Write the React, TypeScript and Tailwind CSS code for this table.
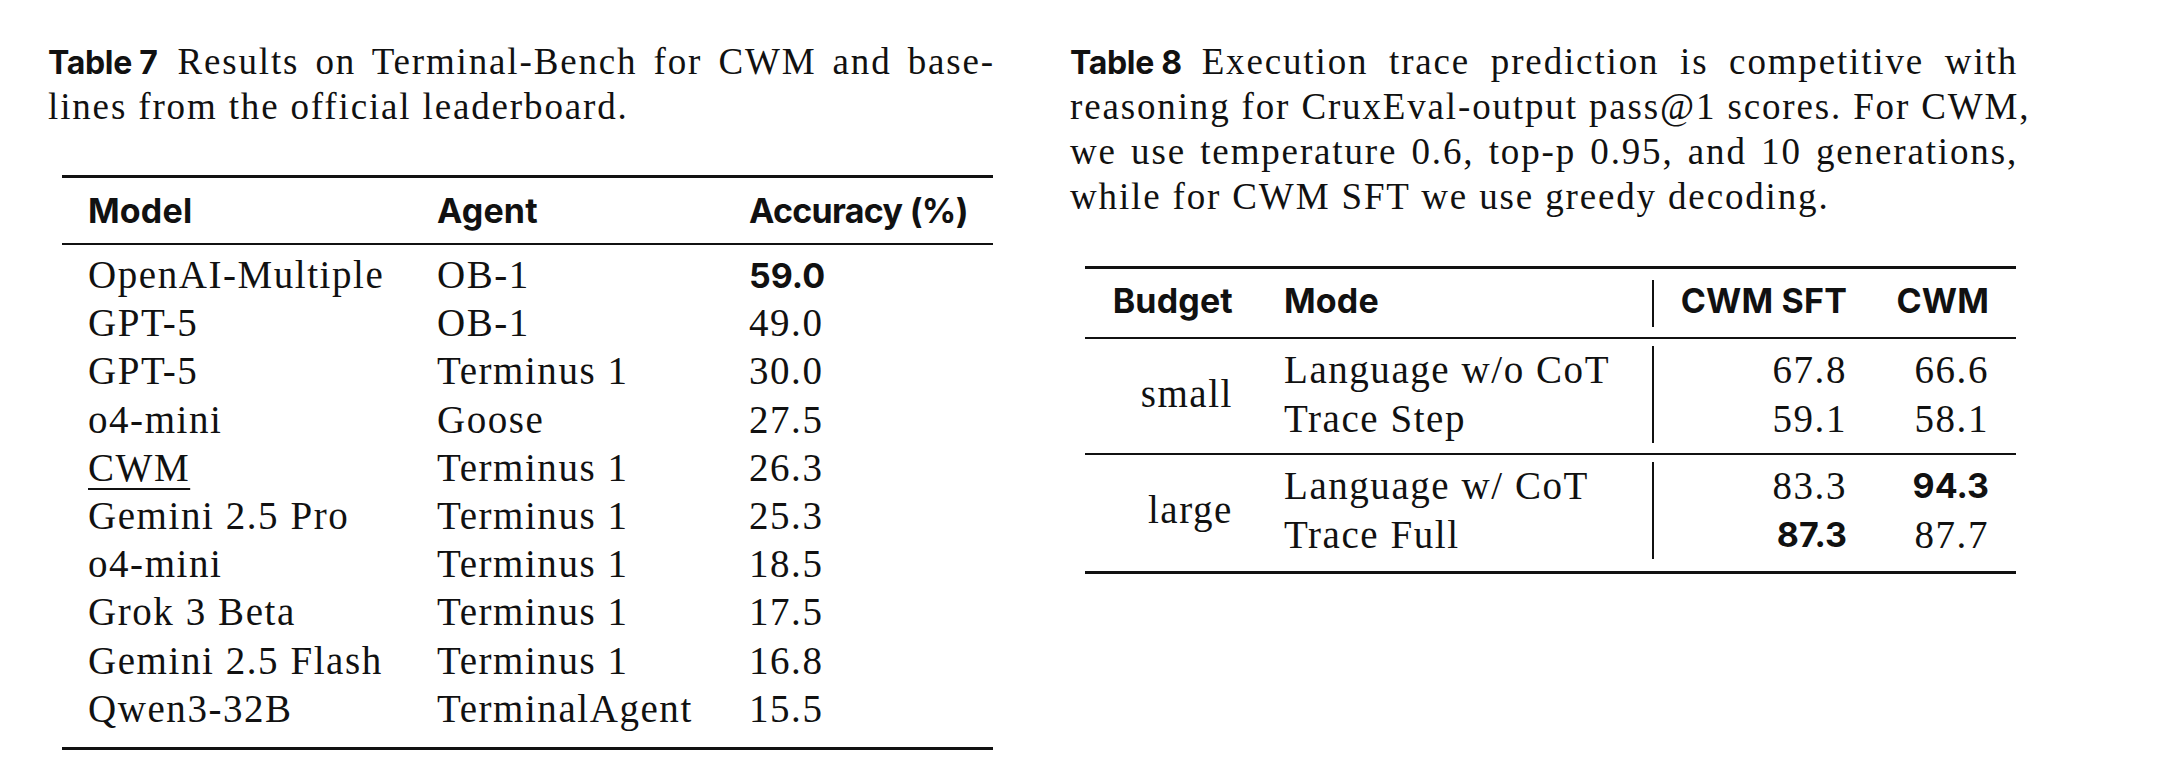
const serif = "font-['Liberation_Serif',serif]";
const sans = "font-['Inter',sans-serif] font-bold";

type Row7 = { model: string; agent: string; acc: string; best?: boolean; ours?: boolean };

const table7: Row7[] = [
  { model: 'OpenAI-Multiple', agent: 'OB-1', acc: '59.0', best: true },
  { model: 'GPT-5', agent: 'OB-1', acc: '49.0' },
  { model: 'GPT-5', agent: 'Terminus 1', acc: '30.0' },
  { model: 'o4-mini', agent: 'Goose', acc: '27.5' },
  { model: 'CWM', agent: 'Terminus 1', acc: '26.3', ours: true },
  { model: 'Gemini 2.5 Pro', agent: 'Terminus 1', acc: '25.3' },
  { model: 'o4-mini', agent: 'Terminus 1', acc: '18.5' },
  { model: 'Grok 3 Beta', agent: 'Terminus 1', acc: '17.5' },
  { model: 'Gemini 2.5 Flash', agent: 'Terminus 1', acc: '16.8' },
  { model: 'Qwen3-32B', agent: 'TerminalAgent', acc: '15.5' },
];

type Cell = { v: string; bold?: boolean };
type Group = { budget: string; rows: { mode: string; sft: Cell; cwm: Cell }[] };

const table8: Group[] = [
  {
    budget: 'small',
    rows: [
      { mode: 'Language w/o CoT', sft: { v: '67.8' }, cwm: { v: '66.6' } },
      { mode: 'Trace Step', sft: { v: '59.1' }, cwm: { v: '58.1' } },
    ],
  },
  {
    budget: 'large',
    rows: [
      { mode: 'Language w/ CoT', sft: { v: '83.3' }, cwm: { v: '94.3', bold: true } },
      { mode: 'Trace Full', sft: { v: '87.3', bold: true }, cwm: { v: '87.7' } },
    ],
  },
];

const body = `${serif} text-[39px] tracking-[0.04em]`;

function CaptionLine({ label, text, last }: { label?: string; text: string; last?: boolean }) {
  return (
    <div
      className={`whitespace-nowrap h-[45px] leading-[45px] ${last ? '' : '[text-align-last:justify] text-justify'}`}
    >
      {label && <span className={`${sans} inline-block mr-[20px] text-[32px] tracking-[-0.01em]`}>{label}</span>}
      <span className={`${serif} text-[37px] tracking-[0.05em]`}>{text}</span>
    </div>
  );
}

function Num({ c }: { c: Cell }) {
  return c.bold ? (
    <span className={`${sans} text-[34px]`}>{c.v}</span>
  ) : (
    <span className={body}>{c.v}</span>
  );
}

function Table7() {
  return (
    <div className="ml-[14px] w-[931px] mt-[46px] border-t-[3px] border-b-[3px] border-[#111]">
      <div className={`${sans} text-[34px] tracking-[0.005em] leading-[48px] pt-[9px] pb-[8px] border-b-2 border-[#111] flex pl-[26px]`}>
        <div className="w-[349px]">Model</div>
        <div className="w-[312px]">Agent</div>
        <div className="tracking-[-0.02em]">Accuracy (%)</div>
      </div>
      <div className="pt-[6px] pb-[14px]">
        {table7.map((r, i) => (
          <div key={i} className={`${body} h-[48.2px] leading-[48.2px] flex pl-[26px]`}>
            <div className="w-[349px]">
              <span className={r.ours ? 'underline decoration-2 underline-offset-[7px]' : ''}>{r.model}</span>
            </div>
            <div className="w-[312px]">{r.agent}</div>
            <div>
              {r.best ? <span className={`${sans} text-[34px] tracking-normal`}>{r.acc}</span> : r.acc}
            </div>
          </div>
        ))}
      </div>
    </div>
  );
}

function Table8() {
  return (
    <div className="ml-[15px] w-[931px] mt-[47px] border-t-[3px] border-b-[3px] border-[#111] text-[#111]">
      <div className={`${sans} text-[34px] tracking-[0.005em] leading-[40px] pt-[11px] pb-[10px] border-b-2 border-[#111] flex`}>
        <div className="w-[148px] text-right pt-[1px]">Budget</div>
        <div className="ml-[51px] w-[368px] pt-[1px]">Mode</div>
        <div className="border-l-2 border-[#111] w-[195px] text-right pt-[1px] pb-[6px]">CWM SFT</div>
        <div className="w-[142px] text-right pt-[1px]">CWM</div>
      </div>
      {table8.map((g, gi) => (
        <div
          key={gi}
          className={`flex pt-[7px] ${gi === 0 ? 'pb-[10px] border-b-2 border-[#111]' : 'pb-[12px]'}`}
        >
          <div className={`${body} w-[148px] flex items-center justify-end`}>{g.budget}</div>
          <div className={`${body} ml-[51px] w-[368px]`}>
            {g.rows.map((r, ri) => (
              <div key={ri} className="h-[48.5px] leading-[48.5px] whitespace-nowrap">
                {r.mode}
              </div>
            ))}
          </div>
          <div className="border-l-2 border-[#111] w-[195px] text-right">
            {g.rows.map((r, ri) => (
              <div key={ri} className="h-[48.5px] leading-[48.5px]">
                <Num c={r.sft} />
              </div>
            ))}
          </div>
          <div className="w-[142px] text-right">
            {g.rows.map((r, ri) => (
              <div key={ri} className="h-[48.5px] leading-[48.5px]">
                <Num c={r.cwm} />
              </div>
            ))}
          </div>
        </div>
      ))}
    </div>
  );
}

export default function App() {
  return (
    <div className="w-[2160px] h-[783px] bg-white text-[#111] flex overflow-hidden">
      <div className="ml-[48px] w-[950px] pt-[39px]">
        <div className="w-[947px]">
          <CaptionLine label="Table 7" text="Results on Terminal-Bench for CWM and base-" />
          <CaptionLine text="lines from the official leaderboard." last />
        </div>
        <Table7 />
      </div>
      <div className="ml-[72px] w-[950px] pt-[39px]">
        <div className="w-[948px]">
          <CaptionLine label="Table 8" text="Execution trace prediction is competitive with" />
          <CaptionLine text="reasoning for CruxEval-output pass@1 scores. For CWM," />
          <CaptionLine text="we use temperature 0.6, top-p 0.95, and 10 generations," />
          <CaptionLine text="while for CWM SFT we use greedy decoding." last />
        </div>
        <Table8 />
      </div>
    </div>
  );
}
